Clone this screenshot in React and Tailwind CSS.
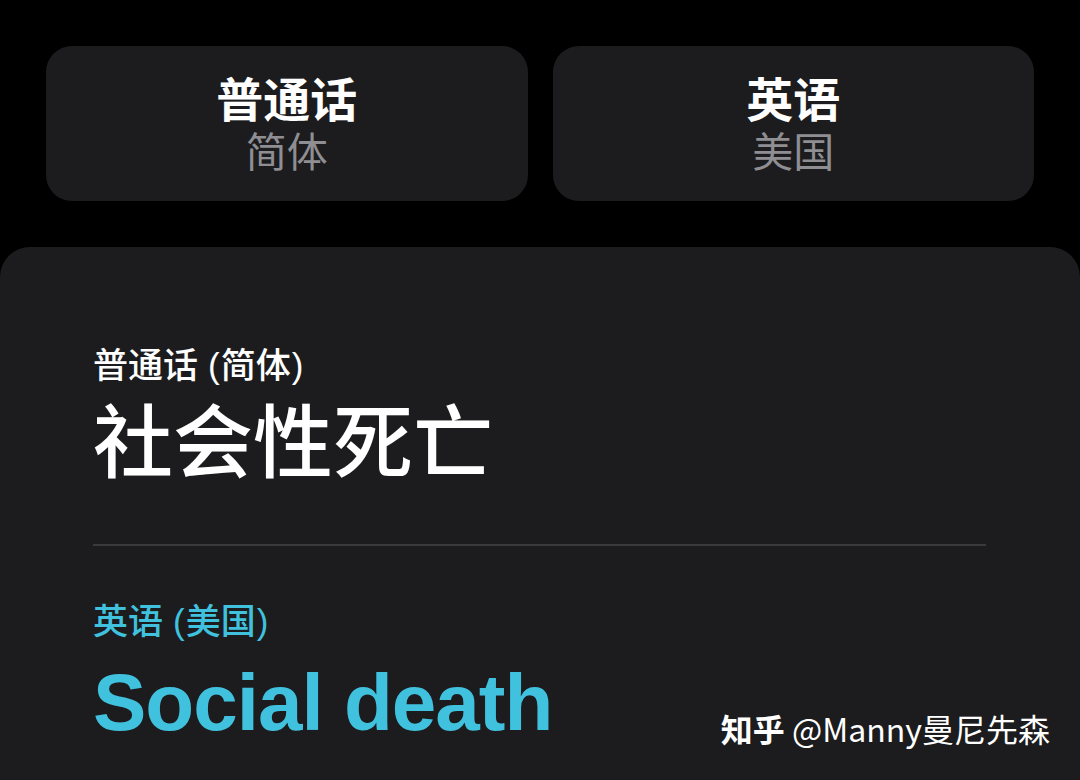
const cjk = { fontFamily: '"Noto Sans CJK SC", "Noto Sans", sans-serif' };
const latin = { fontFamily: '"Liberation Sans", Arial, sans-serif' };

const LangCard = ({ name, region }) => (
    <div className="flex-1 h-[155px] rounded-[26px] bg-[#1c1c1e] flex flex-col items-center justify-center">
        <div className="text-[47px] leading-[52px] font-bold text-white -mt-[4px]">{name}</div>
        <div className="text-[41px] leading-[48px] text-[#8e8e93] mt-[2px]">{region}</div>
    </div>
);

// label like 普通话 (简体), parens set in a latin face
const Label = ({ lang, region, className }) => (
    <div className={"text-[35px] leading-[44px] font-medium " + className}>
        {lang}
        <span style={latin} className="ml-[10px] mr-[1px]">(</span>
        {region}
        <span style={latin} className="ml-[1px]">)</span>
    </div>
);

const App = () => {
    return (
        <div className="w-[1080px] h-[780px] bg-black overflow-hidden flex flex-col" style={cjk}>
            {/* Language picker */}
            <div className="flex gap-[25px] px-[46px] pt-[46px]">
                <LangCard name="普通话" region="简体" />
                <LangCard name="英语" region="美国" />
            </div>

            {/* Translation panel */}
            <div className="relative mt-[46px] flex-1 bg-[#1c1c1e] rounded-t-[30px] px-[93px] pt-[94px]">
                <Label lang="普通话" region="简体" className="text-white" />
                <div className="text-[80px] leading-[96px] font-medium text-white">社会性死亡</div>

                <div className="mt-[60px] h-[2px] bg-[#3a3a3c] mr-[1px]" />

                <Label lang="英语" region="美国" className="mt-[51px] text-[#40c1dd]" />
                <div
                    className="text-[80px] leading-[96px] font-bold tracking-[-1px] text-[#40c1dd] mt-[11px]"
                    style={latin}
                >
                    Social death
                </div>

                {/* Watermark */}
                <div className="absolute right-[30px] bottom-[32px] text-[32px] leading-[40px] text-white">
                    <span className="font-semibold">知乎</span> @Manny曼尼先森
                </div>
            </div>
        </div>
    );
};

export default App;
